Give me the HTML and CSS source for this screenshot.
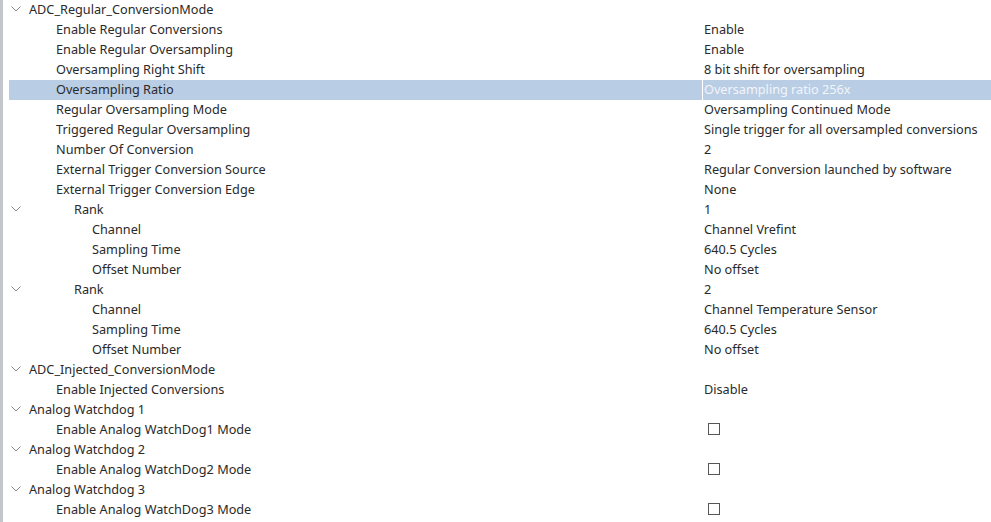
FILE: index.html
```html
<!DOCTYPE html>
<html>
<head>
<meta charset="utf-8">
<link rel="stylesheet" href="styles.css">
</head>
<body>
<div class="page">
  <div class="side-bar"></div>
  <div class="tree">
    <div class="row"><div class="label"><span class="tog"><svg width="10" height="6" viewBox="0 0 10 6"><path d="M0.5 0.5 L5 5 L9.5 0.5" fill="none" stroke="#8a8a8a" stroke-width="1"/></svg></span><span class="txt l0">ADC_Regular_ConversionMode</span></div><div class="val"></div></div>
    <div class="row"><div class="label"><span class="tog"></span><span class="txt l1">Enable Regular Conversions</span></div><div class="val">Enable</div></div>
    <div class="row"><div class="label"><span class="tog"></span><span class="txt l1">Enable Regular Oversampling</span></div><div class="val">Enable</div></div>
    <div class="row"><div class="label"><span class="tog"></span><span class="txt l1">Oversampling Right Shift</span></div><div class="val">8 bit shift for oversampling</div></div>
    <div class="row sel"><div class="label"><span class="tog"></span><span class="txt l1">Oversampling Ratio</span></div><div class="val">Oversampling ratio 256x</div></div>
    <div class="row"><div class="label"><span class="tog"></span><span class="txt l1">Regular Oversampling Mode</span></div><div class="val">Oversampling Continued Mode</div></div>
    <div class="row"><div class="label"><span class="tog"></span><span class="txt l1">Triggered Regular Oversampling</span></div><div class="val">Single trigger for all oversampled conversions</div></div>
    <div class="row"><div class="label"><span class="tog"></span><span class="txt l1">Number Of Conversion</span></div><div class="val">2</div></div>
    <div class="row"><div class="label"><span class="tog"></span><span class="txt l1">External Trigger Conversion Source</span></div><div class="val">Regular Conversion launched by software</div></div>
    <div class="row"><div class="label"><span class="tog"></span><span class="txt l1">External Trigger Conversion Edge</span></div><div class="val">None</div></div>
    <div class="row"><div class="label"><span class="tog"><svg width="10" height="6" viewBox="0 0 10 6"><path d="M0.5 0.5 L5 5 L9.5 0.5" fill="none" stroke="#8a8a8a" stroke-width="1"/></svg></span><span class="txt l2">Rank</span></div><div class="val">1</div></div>
    <div class="row"><div class="label"><span class="tog"></span><span class="txt l3">Channel</span></div><div class="val">Channel Vrefint</div></div>
    <div class="row"><div class="label"><span class="tog"></span><span class="txt l3">Sampling Time</span></div><div class="val">640.5 Cycles</div></div>
    <div class="row"><div class="label"><span class="tog"></span><span class="txt l3">Offset Number</span></div><div class="val">No offset</div></div>
    <div class="row"><div class="label"><span class="tog"><svg width="10" height="6" viewBox="0 0 10 6"><path d="M0.5 0.5 L5 5 L9.5 0.5" fill="none" stroke="#8a8a8a" stroke-width="1"/></svg></span><span class="txt l2">Rank</span></div><div class="val">2</div></div>
    <div class="row"><div class="label"><span class="tog"></span><span class="txt l3">Channel</span></div><div class="val">Channel Temperature Sensor</div></div>
    <div class="row"><div class="label"><span class="tog"></span><span class="txt l3">Sampling Time</span></div><div class="val">640.5 Cycles</div></div>
    <div class="row"><div class="label"><span class="tog"></span><span class="txt l3">Offset Number</span></div><div class="val">No offset</div></div>
    <div class="row"><div class="label"><span class="tog"><svg width="10" height="6" viewBox="0 0 10 6"><path d="M0.5 0.5 L5 5 L9.5 0.5" fill="none" stroke="#8a8a8a" stroke-width="1"/></svg></span><span class="txt l0">ADC_Injected_ConversionMode</span></div><div class="val"></div></div>
    <div class="row"><div class="label"><span class="tog"></span><span class="txt l1">Enable Injected Conversions</span></div><div class="val">Disable</div></div>
    <div class="row"><div class="label"><span class="tog"><svg width="10" height="6" viewBox="0 0 10 6"><path d="M0.5 0.5 L5 5 L9.5 0.5" fill="none" stroke="#8a8a8a" stroke-width="1"/></svg></span><span class="txt l0">Analog Watchdog 1</span></div><div class="val"></div></div>
    <div class="row"><div class="label"><span class="tog"></span><span class="txt l1">Enable Analog WatchDog1 Mode</span></div><div class="val"><span class="check"></span></div></div>
    <div class="row"><div class="label"><span class="tog"><svg width="10" height="6" viewBox="0 0 10 6"><path d="M0.5 0.5 L5 5 L9.5 0.5" fill="none" stroke="#8a8a8a" stroke-width="1"/></svg></span><span class="txt l0">Analog Watchdog 2</span></div><div class="val"></div></div>
    <div class="row"><div class="label"><span class="tog"></span><span class="txt l1">Enable Analog WatchDog2 Mode</span></div><div class="val"><span class="check"></span></div></div>
    <div class="row"><div class="label"><span class="tog"><svg width="10" height="6" viewBox="0 0 10 6"><path d="M0.5 0.5 L5 5 L9.5 0.5" fill="none" stroke="#8a8a8a" stroke-width="1"/></svg></span><span class="txt l0">Analog Watchdog 3</span></div><div class="val"></div></div>
    <div class="row"><div class="label"><span class="tog"></span><span class="txt l1">Enable Analog WatchDog3 Mode</span></div><div class="val"><span class="check"></span></div></div>
  </div>
</div>
</body>
</html>
```
FILE: styles.css
```css
html, body {
  margin: 0;
  padding: 0;
  background: #ffffff;
}
body {
  font-family: "Noto Sans", "Open Sans", sans-serif;
  font-size: 12.7px;
  color: #2a2a2a;
  overflow: hidden;
}
.page {
  display: flex;
  height: 522px;
}
.side-bar {
  width: 3px;
  flex: none;
  background: #c3c7cc;
}
.tree {
  flex: 1;
  margin-left: 6px;
  display: flex;
  flex-direction: column;
}
.row {
  display: grid;
  grid-template-columns: 693px 1fr;
  height: 20px;
  line-height: 18px;
  padding-bottom: 2px;
  box-sizing: border-box;
  white-space: nowrap;
}
.row.sel {
  background: #b9cde5;
}
.label {
  display: flex;
  align-items: center;
}
.tog {
  width: 20px;
  flex: none;
  display: flex;
  align-items: center;
  padding-left: 2px;
  box-sizing: border-box;
  height: 18px;
}
.tog svg {
  display: block;
}
.txt.l0 { margin-left: 0; }
.txt.l1 { margin-left: 27px; }
.txt.l2 { margin-left: 45px; }
.txt.l3 { margin-left: 63px; }
.val {
  border-left: 1px solid transparent;
  padding-left: 1px;
  margin-bottom: -2px;
  padding-bottom: 2px;
  display: flex;
  align-items: center;
}
.row.sel .val {
  border-left-color: #ffffff;
  color: #f2f5fa;
}
.check {
  display: block;
  width: 10px;
  height: 10px;
  border: 1px solid #555555;
  margin-left: 4px;
}
```
